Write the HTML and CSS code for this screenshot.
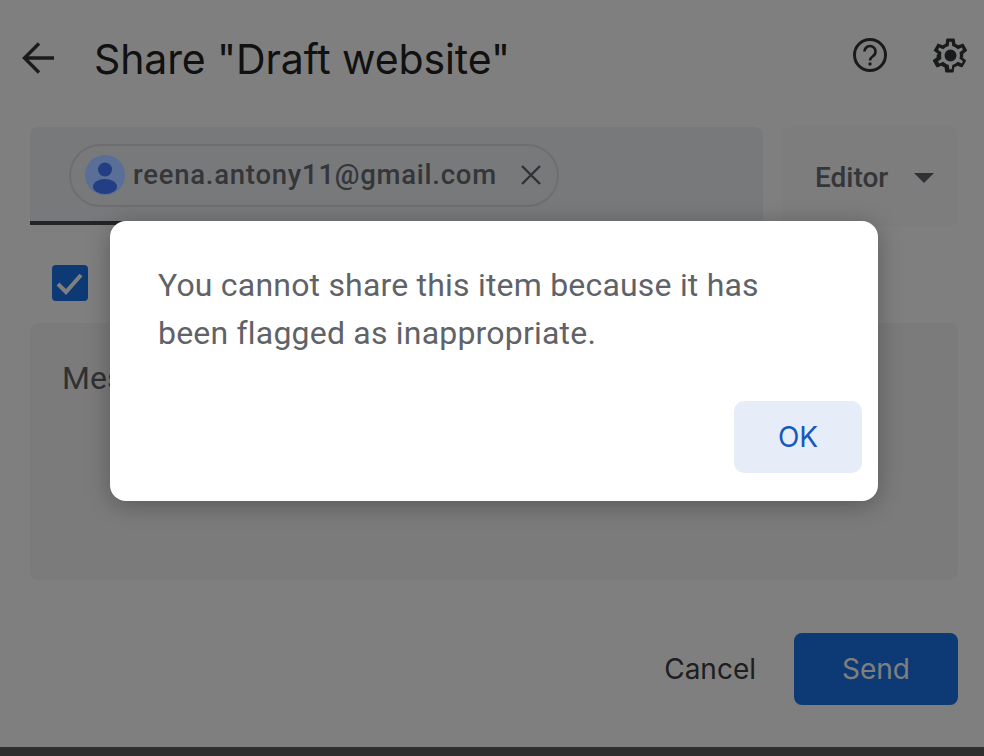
FILE: index.html
```html
<!DOCTYPE html>
<html lang="en">
<head>
<meta charset="utf-8">
<title>Share</title>
<link rel="stylesheet" href="styles.css">
</head>
<body>
<div class="page">
  <main class="share">
    <header class="top">
      <svg class="back" viewBox="0 0 34 34" width="34" height="34"><path d="M33 17H4M18 2.500 3.500 17 18 31.500" fill="none" stroke="#333538" stroke-width="3.400"/></svg>
      <h1 class="title">Share "Draft website"</h1>
      <svg class="help" viewBox="0 0 36 36" width="36" height="36"><circle cx="18" cy="18" r="15.500" fill="none" stroke="#333538" stroke-width="3"/><path d="M12.500 14.500a5.500 5.500 0 1 1 8.800 4.400c-2 1.500-3.300 2.400-3.300 4.600" fill="none" stroke="#333538" stroke-width="2.600"/><circle cx="18" cy="27" r="1.700" fill="#333538"/></svg>
      <svg class="gear" viewBox="0 0 24 24" width="41" height="41"><path fill="#333538" fill-rule="evenodd" d="M19.430 12.980c.04-.32.070-.64.070-.98s-.03-.66-.07-.98l2.110-1.650c.19-.15.240-.42.120-.64l-2-3.460c-.12-.22-.39-.3-.61-.22l-2.490 1c-.52-.4-1.080-.73-1.690-.98l-.38-2.650A.49.490 0 0 0 14 2h-4c-.25 0-.46.180-.49.420l-.38 2.650c-.61.250-1.170.59-1.690.98l-2.490-1c-.23-.09-.49 0-.61.220l-2 3.460c-.13.220-.7.490.12.640l2.110 1.650c-.04.320-.7.650-.7.980s.03.660.07.980l-2.110 1.650c-.19.150-.24.420-.12.640l2 3.460c.12.220.39.300.61.220l2.490-1c.52.400 1.080.730 1.690.980l.38 2.650c.3.240.24.420.49.420h4c.25 0 .46-.18.490-.42l.38-2.650c.61-.25 1.170-.59 1.690-.98l2.490 1c.23.090.49 0 .61-.22l2-3.460c.12-.22.070-.49-.12-.64l-2.110-1.650zM17.450 11.270c.04.310.05.520.05.730s-.02.430-.05.730l-.14 1.130.89.700 1.080.840-.7 1.210-1.270-.51-1.040-.42-.9.680c-.43.320-.84.560-1.250.730l-1.060.43-.16 1.130-.2 1.350h-1.400l-.19-1.350-.16-1.130-1.060-.43c-.43-.18-.83-.41-1.230-.71l-.91-.7-1.060.43-1.270.51-.7-1.210 1.080-.84.890-.7-.14-1.130c-.03-.31-.05-.54-.05-.74s.02-.43.05-.73l.14-1.130-.89-.7-1.080-.84.700-1.210 1.270.51 1.040.42.900-.68c.43-.32.840-.56 1.250-.73l1.060-.43.160-1.130.2-1.350h1.390l.19 1.350.16 1.130 1.060.43c.43.180.83.410 1.230.71l.91.700 1.060-.43 1.270-.51.700 1.210-1.070.85-.89.700.14 1.130zM12 8.500a3.500 3.500 0 1 0 0 7 3.500 3.500 0 0 0 0-7z"/></svg>
    </header>

    <section class="recipients">
      <div class="field">
        <div class="chip">
          <svg class="avatar" viewBox="0 0 40 40" width="40" height="40"><circle cx="20" cy="20" r="20" fill="#5a6f97"/><circle cx="20" cy="14.500" r="7" fill="#233e82"/><ellipse cx="20" cy="31.500" rx="12" ry="7.500" fill="#233e82"/></svg>
          <span class="email">reena.antony11@gmail.com</span>
          <svg class="close" viewBox="0 0 20 20" width="20" height="20"><path d="M1 1l18 18M19 1 1 19" fill="none" stroke="#5f6368" stroke-width="2.400"/></svg>
        </div>
      </div>
      <div class="role">
        <span>Editor</span>
        <span class="caret"></span>
      </div>
    </section>

    <div class="notify">
      <svg class="check" viewBox="0 0 36 36" width="36" height="36"><rect width="36" height="36" rx="4" fill="#1a73e8"/><path d="M6 19l8 8L29 10" fill="none" stroke="#fff" stroke-width="4"/></svg>
    </div>

    <div class="message">Message</div>

    <footer class="actions">
      <span class="cancel">Cancel</span>
      <span class="send">Send</span>
    </footer>
  </main>
  <div class="bottom"></div>

  <div class="scrim"></div>
  <div class="dialog" role="alertdialog">
    <p class="dialog-text">You cannot share this item because it has been flagged as inappropriate.</p>
    <div class="dialog-actions"><span class="ok">OK</span></div>
  </div>
</div>
</body>
</html>
```
FILE: styles.css
```css
* { box-sizing: border-box; }
html, body { margin: 0; padding: 0; }
body { font-family: Roboto, "Liberation Sans", sans-serif; background: #fff; }
.page { position: relative; width: 984px; height: 756px; overflow: hidden; display: flex; flex-direction: column; }
.share { flex: 1; padding: 0 26px 0 30px; display: flex; flex-direction: column; }
.top { height: 127px; display: flex; align-items: center; padding-bottom: 9px; margin-left: -9px; }
.back { flex: none; margin-top: -2px; }
.title { flex: 1; margin: 0 0 0 39px; font-family: Inter, Roboto, sans-serif; font-weight: 400; font-size: 41px; line-height: 48px; color: #222; letter-spacing: -0.12px; white-space: nowrap; }
.help { flex: none; margin-right: 42px; margin-top: -8px; }
.gear { flex: none; margin-right: -13px; margin-top: -8px; }
.recipients { display: flex; gap: 19px; align-items: flex-start; }
.field { flex: 1; height: 98px; padding: 17px 0 0 39px; background: #f1f3f6; border-bottom: 4px solid #46484e; border-radius: 8px 8px 0 0; }
.chip { width: 490px; height: 63px; display: flex; align-items: center; padding: 0 16px 2px 14px; border: 2px solid #dcdde0; border-radius: 32px; }
.avatar { flex: none; position: relative; z-index: 2; }
.email { flex: 1; margin-left: 8px; font-size: 27.5px; font-weight: 500; color: #6a6d72; letter-spacing: 0.75px; white-space: nowrap; }
.close { flex: none; }
.role { width: 176px; height: 99px; display: flex; align-items: center; padding: 2px 24px 0 33px; justify-content: space-between; background: #fafafa; border-radius: 8px; font-size: 28px; font-weight: 500; color: #6a6d72; }
.caret { width: 0; height: 0; border-left: 10px solid transparent; border-right: 10px solid transparent; border-top: 10px solid #5f6368; }
.notify { height: 97px; padding: 39px 0 0 22px; }
.check { display: block; }
.message { height: 257px; padding: 35px 32px; background: #f7f7f7; border-radius: 8px; font-size: 32px; line-height: 40px; color: #5f6368; }
.actions { display: flex; justify-content: flex-end; align-items: center; margin-top: 53px; height: 72px; }
.cancel { font-family: Inter, Roboto, sans-serif; font-size: 28px; font-weight: 400; color: #3c3c3c; margin-right: 38px; }
.send { width: 164px; height: 72px; display: flex; align-items: center; justify-content: center; background: #1a73e8; color: #fff; border-radius: 8px; font-family: Inter, Roboto, sans-serif; font-size: 28px; font-weight: 400; }
.bottom { height: 9px; background: #5f5f5f; }
.scrim { position: absolute; inset: 0; z-index: 1; background: rgba(0, 0, 0, 0.5); }
.dialog { position: absolute; z-index: 3; left: 110px; top: 221px; width: 768px; height: 280px; padding: 40px 16px 28px 48px; background: #fff; border-radius: 16px; box-shadow: 0 4px 24px rgba(0,0,0,.28); display: flex; flex-direction: column; justify-content: space-between; }
.dialog-text { margin: 0; width: 640px; font-size: 32px; line-height: 48px; color: #5f6368; letter-spacing: 0.2px; }
.dialog-actions { display: flex; justify-content: flex-end; }
.ok { width: 128px; height: 72px; display: flex; align-items: center; justify-content: center; background: #e6edf9; border-radius: 10px; color: #1558c0; font-family: Inter, Roboto, sans-serif; font-size: 28px; font-weight: 400; }
```
